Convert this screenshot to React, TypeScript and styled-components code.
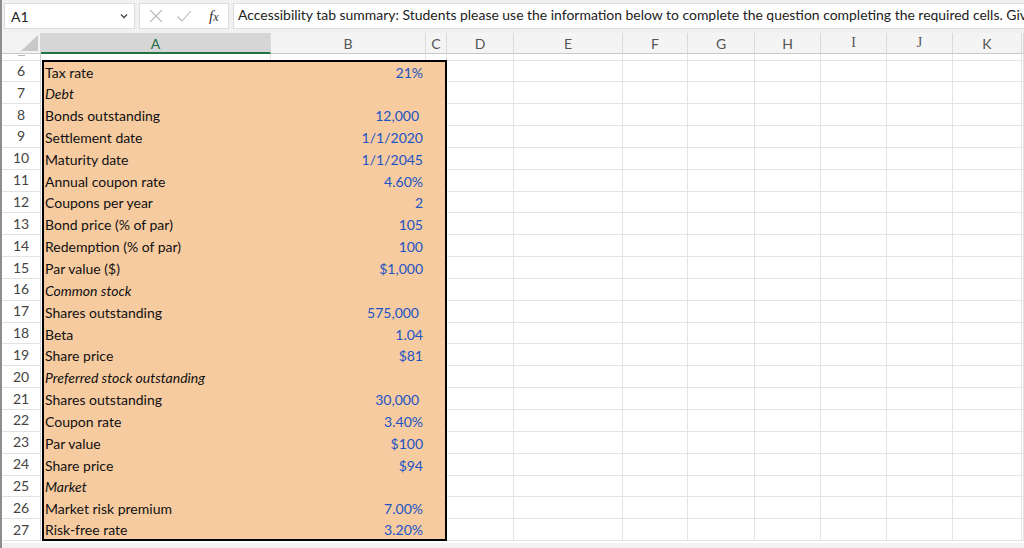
import styled, { createGlobalStyle } from 'styled-components'

const GlobalStyle = createGlobalStyle`
  html, body {
    margin: 0;
    padding: 0;
    background: #f1f1f1;
  }
  body {
    font-family: Lato, 'Noto Sans', sans-serif;
    color: #111;
  }
`

type Col = { id: string; w: number }

const COLS: Col[] = [
  { id: 'A', w: 230 },
  { id: 'B', w: 155 },
  { id: 'C', w: 21 },
  { id: 'D', w: 67 },
  { id: 'E', w: 109 },
  { id: 'F', w: 65 },
  { id: 'G', w: 67 },
  { id: 'H', w: 66 },
  { id: 'I', w: 66 },
  { id: 'J', w: 66 },
  { id: 'K', w: 69 },
]

type Row = { n: number; label: string; value?: string; italic?: boolean; pad?: boolean }

const ROWS: Row[] = [
  { n: 6, label: 'Tax rate', value: '21%' },
  { n: 7, label: 'Debt', italic: true },
  { n: 8, label: 'Bonds outstanding', value: '12,000', pad: true },
  { n: 9, label: 'Settlement date', value: '1/1/2020' },
  { n: 10, label: 'Maturity date', value: '1/1/2045' },
  { n: 11, label: 'Annual coupon rate', value: '4.60%' },
  { n: 12, label: 'Coupons per year', value: '2' },
  { n: 13, label: 'Bond price (% of par)', value: '105' },
  { n: 14, label: 'Redemption (% of par)', value: '100' },
  { n: 15, label: 'Par value ($)', value: '$1,000' },
  { n: 16, label: 'Common stock', italic: true },
  { n: 17, label: 'Shares outstanding', value: '575,000', pad: true },
  { n: 18, label: 'Beta', value: '1.04' },
  { n: 19, label: 'Share price', value: '$81' },
  { n: 20, label: 'Preferred stock outstanding', italic: true },
  { n: 21, label: 'Shares outstanding', value: '30,000', pad: true },
  { n: 22, label: 'Coupon rate', value: '3.40%' },
  { n: 23, label: 'Par value', value: '$100' },
  { n: 24, label: 'Share price', value: '$94' },
  { n: 25, label: 'Market', italic: true },
  { n: 26, label: 'Market risk premium', value: '7.00%' },
  { n: 27, label: 'Risk-free rate', value: '3.20%' },
]

const ROW_H = 21.85
const EMPTY_COLS = COLS.slice(3)

const FORMULA =
  'Accessibility tab summary: Students please use the information below to complete the question completing the required cells. Giving'

export default function App() {
  return (
    <Page>
      <GlobalStyle />
      <FormulaBar>
        <NameBox>
          <span>A1</span>
          <Chevron viewBox="0 0 8 6">
            <path d="M1 1.5 L4 4.5 L7 1.5" />
          </Chevron>
        </NameBox>
        <ActionBox>
          <ActionIcon viewBox="0 0 16 16">
            <path d="M2 2 L14 14 M14 2 L2 14" />
          </ActionIcon>
          <ActionIcon viewBox="0 0 16 16">
            <path d="M1.5 8.5 L6 13 L15 3" />
          </ActionIcon>
          <Fx>
            f<sub>x</sub>
          </Fx>
        </ActionBox>
        <FormulaInput>{FORMULA}</FormulaInput>
      </FormulaBar>

      <Sheet>
        <Corner>
          <CornerMark />
        </Corner>
        {COLS.map((c) => (
          <ColHeader key={c.id} selected={c.id === 'A'} serif={c.id === 'I' || c.id === 'J'}>
            {c.id}
          </ColHeader>
        ))}
        <ColHeader />

        <RowHeader>
          <HiddenRowMark />
        </RowHeader>
        {COLS.map((c) => (
          <Cell key={c.id} />
        ))}
        <Cell />

        <DataBox>
          {ROWS.map((r) => (
            <BoxRow key={r.n}>
              <Label italic={r.italic}>{r.label}</Label>
              <Value pad={r.pad}>{r.value}</Value>
            </BoxRow>
          ))}
        </DataBox>

        {ROWS.map((r) => (
          <RowGroup key={r.n}>
            <RowHeader>{r.n}</RowHeader>
            {EMPTY_COLS.map((c) => (
              <Cell key={c.id} />
            ))}
            <Cell />
          </RowGroup>
        ))}
      </Sheet>
      <ScrollStrip />
    </Page>
  )
}

const Page = styled.div`
  width: 1024px;
  height: 548px;
  box-sizing: border-box;
  border-left: 2px solid #8d8d8d;
  background: #f1f1f1;
  overflow: hidden;
  display: flex;
  flex-direction: column;
`

const FormulaBar = styled.div`
  height: 33px;
  box-sizing: border-box;
  padding: 3px 0 4px 2px;
  display: flex;
  gap: 4px;
  align-items: stretch;
`

const NameBox = styled.div`
  width: 131px;
  box-sizing: border-box;
  background: #fff;
  border: 1px solid #dcdcdc;
  display: flex;
  align-items: center;
  justify-content: space-between;
  padding: 0 6px 0 6px;
  font-size: 14px;
  color: #222;
`

const Chevron = styled.svg`
  width: 8px;
  height: 6px;
  fill: none;
  stroke: #444;
  stroke-width: 1.3;
`

const ActionBox = styled.div`
  width: 90px;
  box-sizing: border-box;
  background: #fff;
  border: 1px solid #dcdcdc;
  display: flex;
  align-items: center;
  padding: 0 6px 0 8px;
  gap: 12px;
`

const ActionIcon = styled.svg`
  width: 16px;
  height: 16px;
  fill: none;
  stroke: #b8b8b8;
  stroke-width: 1.1;
`

const Fx = styled.span`
  font-family: 'Liberation Serif', 'DejaVu Serif', serif;
  font-style: italic;
  font-size: 15px;
  color: #333;
  margin-left: 5px;
  sub {
    font-size: 12px;
    vertical-align: baseline;
  }
`

const FormulaInput = styled.div`
  flex: 1;
  min-width: 0;
  box-sizing: border-box;
  background: #fff;
  border: 1px solid #dcdcdc;
  border-right: none;
  padding-left: 4px;
  line-height: 22px;
  font-size: 13.95px;
  color: #222;
  white-space: nowrap;
  overflow: hidden;
`

const Sheet = styled.div`
  flex: none;
  display: grid;
  grid-template-columns: 39px ${COLS.map((c) => `${c.w}px`).join(' ')} 1fr;
  grid-template-rows: 21px 6.5px repeat(${ROWS.length}, ${ROW_H}px);
  background: #fff;
  padding-bottom: 2px;
`

const Corner = styled.div`
  background: #f3f3f3;
  border-right: 1px solid #d4d4d4;
  border-bottom: 1px solid #c9c9c9;
  position: relative;
`

const CornerMark = styled.div`
  position: absolute;
  right: 2px;
  bottom: 2px;
  width: 0;
  height: 0;
  border-left: 17px solid transparent;
  border-bottom: 16px solid #c8c8c8;
`

const ColHeader = styled.div<{ selected?: boolean; serif?: boolean }>`
  box-sizing: border-box;
  display: flex;
  align-items: center;
  justify-content: center;
  font-size: 14px;
  font-family: ${(p) => (p.serif ? "'Liberation Serif', serif" : 'inherit')};
  color: ${(p) => (p.selected ? '#1e6b41' : '#555')};
  background: ${(p) => (p.selected ? '#d6d6d6' : '#f4f4f4')};
  border-right: 1px solid #dadada;
  border-bottom: ${(p) => (p.selected ? '2px solid #217346' : '1px solid #c9c9c9')};
  padding-top: ${(p) => (p.selected ? '1px' : '0')};
`

const RowGroup = styled.div`
  display: contents;
`

const RowHeader = styled.div`
  box-sizing: border-box;
  display: flex;
  align-items: center;
  justify-content: center;
  overflow: hidden;
  font-size: 14px;
  color: #444;
  background: #fff;
  border-right: 1px solid #cfcfcf;
  border-bottom: 1px solid #e2e2e2;
  padding-bottom: 1px;
`

const HiddenRowMark = styled.div`
  width: 7px;
  height: 1.5px;
  margin-top: -2px;
  background: #b5b5b5;
`

const Cell = styled.div`
  box-sizing: border-box;
  border-right: 1px solid #e4e4e4;
  border-bottom: 1px solid #e4e4e4;
`

const DataBox = styled.div`
  grid-column: 2 / 5;
  grid-row: 3 / ${3 + ROWS.length};
  box-sizing: border-box;
  margin: -1px 0 0 1px;
  border: 2px solid #000;
  background: #f7cba0;
  display: grid;
  grid-template-rows: ${ROW_H - 1}px repeat(${ROWS.length - 2}, ${ROW_H}px) 1fr;
`

const BoxRow = styled.div`
  display: grid;
  grid-template-columns: 227px 155px 1fr;
  align-items: center;
  padding-top: 1px;
`

const Label = styled.div<{ italic?: boolean }>`
  font-size: 14px;
  font-style: ${(p) => (p.italic ? 'italic' : 'normal')};
  color: #111;
  padding-left: 1px;
  white-space: nowrap;
`

const Value = styled.div<{ pad?: boolean }>`
  font-size: 14px;
  color: #2153c5;
  text-align: right;
  padding-right: ${(p) => (p.pad ? '7px' : '3px')};
`

const ScrollStrip = styled.div`
  flex: 1;
  background: #f1f1f1;
`
